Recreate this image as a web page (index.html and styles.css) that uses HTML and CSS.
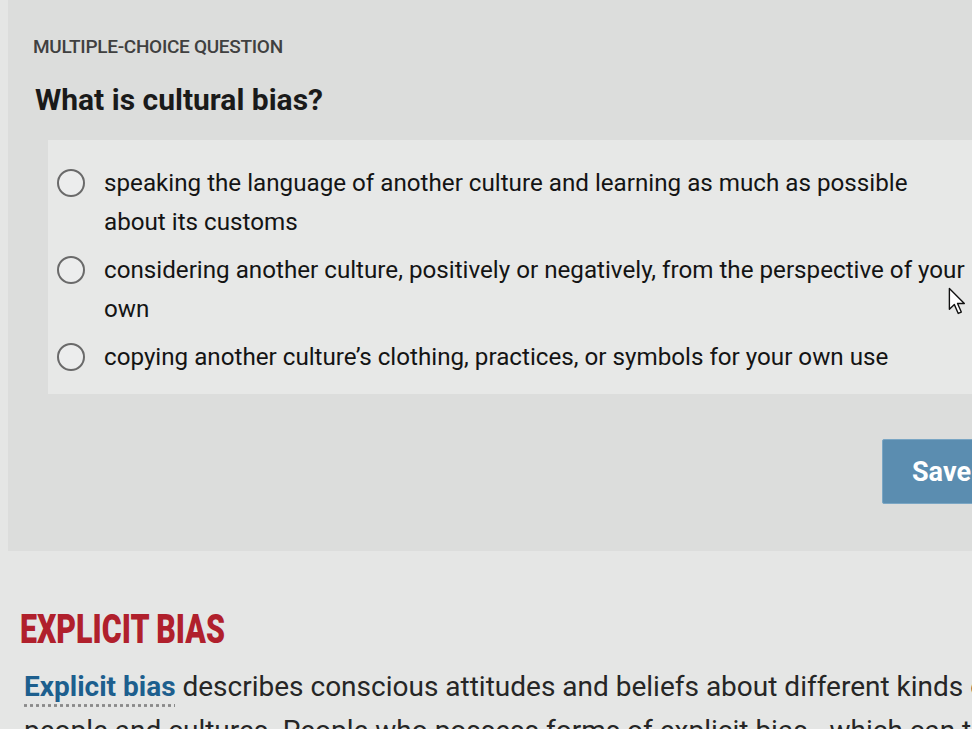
FILE: index.html
```html
<!DOCTYPE html>
<html lang="en">
<head>
<meta charset="utf-8">
<title>What is cultural bias?</title>
<link rel="stylesheet" href="styles.css">
</head>
<body>
<main class="page">
  <section class="question-panel">
    <div class="q-type">MULTIPLE-CHOICE QUESTION</div>
    <h2 class="q-title">What is cultural bias?</h2>
    <div class="choices">
      <label class="choice"><span class="radio"></span><span class="choice-text">speaking the language of another culture and learning as much as possible about its customs</span></label>
      <label class="choice"><span class="radio"></span><span class="choice-text">considering another culture, positively or negatively, from the perspective of your own</span></label>
      <label class="choice"><span class="radio"></span><span class="choice-text">copying another culture’s clothing, practices, or symbols for your own use</span></label>
    </div>
    <div class="actions"><button class="save" type="button">Save</button></div>
  </section>
  <section class="article">
    <h3 class="section-title"><span>EXPLICIT BIAS</span></h3>
    <p class="body-text"><a class="term">Explicit bias</a> describes conscious attitudes and beliefs about different kinds of people and cultures. People who possess forms of explicit bias—which can take the form of prejudice or stereotypes—are aware of their attitudes.</p>
  </section>
</main>
<svg class="cursor" width="18" height="28" viewBox="0 0 13 20" aria-hidden="true"><path d="M1 1 V16 L4.6 12.6 L7.4 19 L9.6 18 L6.9 11.8 H11.8 Z" fill="#fff" stroke="#111" stroke-width="1" stroke-linejoin="round"/></svg>
</body>
</html>
```
FILE: styles.css
```css
html, body {
  margin: 0;
  padding: 0;
  overflow: hidden;
}
body {
  background: #e5e6e5;
  font-family: Roboto, "Liberation Sans", Arial, sans-serif;
  color: #222;
  width: 972px;
  height: 729px;
  position: relative;
}
.page {
  display: flex;
  flex-direction: column;
}
.question-panel {
  margin-left: 8px;
  background: #dcdddc;
  padding: 35px 0 47px 25px;
}
.q-type {
  font-size: 19px;
  line-height: 24px;
  font-weight: 500;
  color: #404040;
  letter-spacing: -0.3px;
}
.q-title {
  margin: 25px 0 0 2px;
  font-size: 30px;
  line-height: 32px;
  font-weight: 700;
  color: #1a1a1a;
}
.choices {
  margin: 24px 0 0 15px;
  background: #e7e8e7;
  padding: 24px 0 17px 9px;
  display: flex;
  flex-direction: column;
  gap: 9px;
}
.choice {
  display: flex;
  align-items: flex-start;
  gap: 19px;
  font-size: 24.2px;
  line-height: 39px;
  color: #141414;
}
.radio {
  flex: none;
  width: 24px;
  height: 24px;
  border: 2px solid #6a6a6a;
  border-radius: 50%;
  margin-top: 5px;
  background: #eceded;
}
.choice-text {
  width: 868px;
}
.actions {
  display: flex;
  justify-content: flex-end;
  margin-top: 45px;
}
.save {
  width: 120px;
  height: 65px;
  margin-right: -30px;
  background: #5b8db0;
  border: 1px solid #7aa6c4;
  border-radius: 2px;
  color: #fff;
  font-family: Roboto, "Liberation Sans", Arial, sans-serif;
  font-size: 27px;
  font-weight: 700;
  text-align: left;
  padding: 0 0 0 29px;
}
.article {
  padding: 54px 0 0 20px;
}
.section-title {
  margin: 0;
  font-size: 41px;
  line-height: 48px;
  font-weight: 900;
  color: #b0202c;
  white-space: nowrap;
}
.section-title span {
  display: inline-block;
  transform: scaleX(0.74);
  transform-origin: left center;
}
.body-text {
  margin: 12px 0 0 4px;
  width: 1010px;
  font-size: 28px;
  line-height: 44px;
  color: #262626;
}
.term {
  color: #1d5f8e;
  font-weight: 700;
  text-decoration: underline dotted #8a8a8a;
  text-underline-offset: 8px;
}
.cursor {
  position: absolute;
  left: 948px;
  top: 287px;
}
```
